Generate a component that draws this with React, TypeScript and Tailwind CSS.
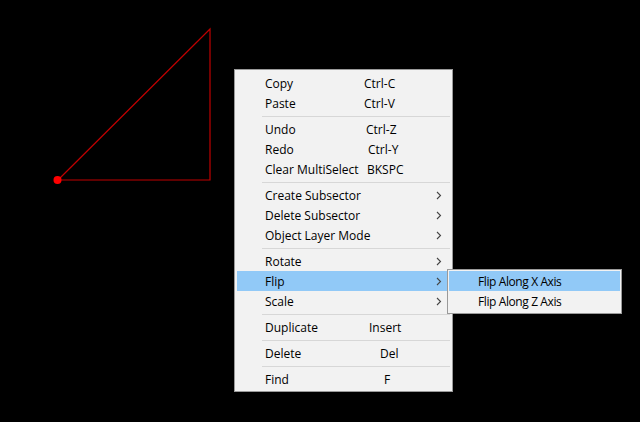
import React from "react";

type Item =
  | { type: "sep" }
  | { type: "item"; label: string; shortcut?: string; sc?: string; sub?: boolean; active?: boolean };

const items: Item[] = [
  { type: "item", label: "Copy", shortcut: "Ctrl-C", sc: "pl-0" },
  { type: "item", label: "Paste", shortcut: "Ctrl-V", sc: "pl-0" },
  { type: "sep" },
  { type: "item", label: "Undo", shortcut: "Ctrl-Z", sc: "pl-[2px]" },
  { type: "item", label: "Redo", shortcut: "Ctrl-Y", sc: "pl-[4px]" },
  { type: "item", label: "Clear MultiSelect", shortcut: "BKSPC", sc: "pl-[3px]" },
  { type: "sep" },
  { type: "item", label: "Create Subsector", sub: true },
  { type: "item", label: "Delete Subsector", sub: true },
  { type: "item", label: "Object Layer Mode", sub: true },
  { type: "sep" },
  { type: "item", label: "Rotate", sub: true },
  { type: "item", label: "Flip", sub: true, active: true },
  { type: "item", label: "Scale", sub: true },
  { type: "sep" },
  { type: "item", label: "Duplicate", shortcut: "Insert", sc: "pl-[5px]" },
  { type: "sep" },
  { type: "item", label: "Delete", shortcut: "Del", sc: "pl-[16px]" },
  { type: "sep" },
  { type: "item", label: "Find", shortcut: "F", sc: "pl-[20px]" },
];

function Chevron() {
  return (
    <svg width="6" height="9" viewBox="0 0 6 9" className="absolute left-[199px] top-[6px]">
      <path d="M1 1 L4.5 4.5 L1 8" fill="none" stroke="#444" strokeWidth="1.1" />
    </svg>
  );
}

export default function App() {
  return (
    <div
      className="relative w-[640px] h-[422px] bg-black overflow-hidden text-[12px] text-black"
      style={{ fontFamily: '"Open Sans", "Noto Sans", sans-serif' }}
    >
      <svg width="640" height="422" className="absolute left-0 top-0">
        <polyline points="58,180 210,29 210,180 58,180" fill="none" stroke="#c00000" strokeWidth="1.2" />
        <circle cx="57.5" cy="180" r="4" fill="#ff0000" />
      </svg>

      <div className="absolute left-[234px] top-[69px] w-[219px] h-[323px] bg-[#f2f2f2] border border-[#9a9a9a] pt-[3px] flex flex-col">
        {items.map((it, i) =>
          it.type === "sep" ? (
            <div key={i} className="h-[6px] flex items-center mx-[2px] pl-[25px]">
              <div className="h-px w-full bg-[#d7d7d7]" />
            </div>
          ) : (
            <div
              key={i}
              className={`relative h-[20px] mx-[2px] pl-[28px] pt-[2px] flex items-center whitespace-nowrap ${
                it.active ? "bg-[#91c9f7]" : ""
              }`}
            >
              <span className="w-[99px] shrink-0">{it.label}</span>
              {it.shortcut && <span className={it.sc}>{it.shortcut}</span>}
              {it.sub && <Chevron />}
            </div>
          )
        )}
      </div>

      <div className="absolute left-[447px] top-[269px] w-[175px] h-[45px] bg-[#f2f2f2] border border-[#9a9a9a] px-[1px] pt-[1px] flex flex-col tracking-[-0.4px]">
        <div className="h-[20px] bg-[#91c9f7] pl-[29px] pt-[2px] flex items-center whitespace-nowrap">Flip Along X Axis</div>
        <div className="h-[20px] pl-[29px] pt-[2px] flex items-center whitespace-nowrap">Flip Along Z Axis</div>
      </div>
    </div>
  );
}
